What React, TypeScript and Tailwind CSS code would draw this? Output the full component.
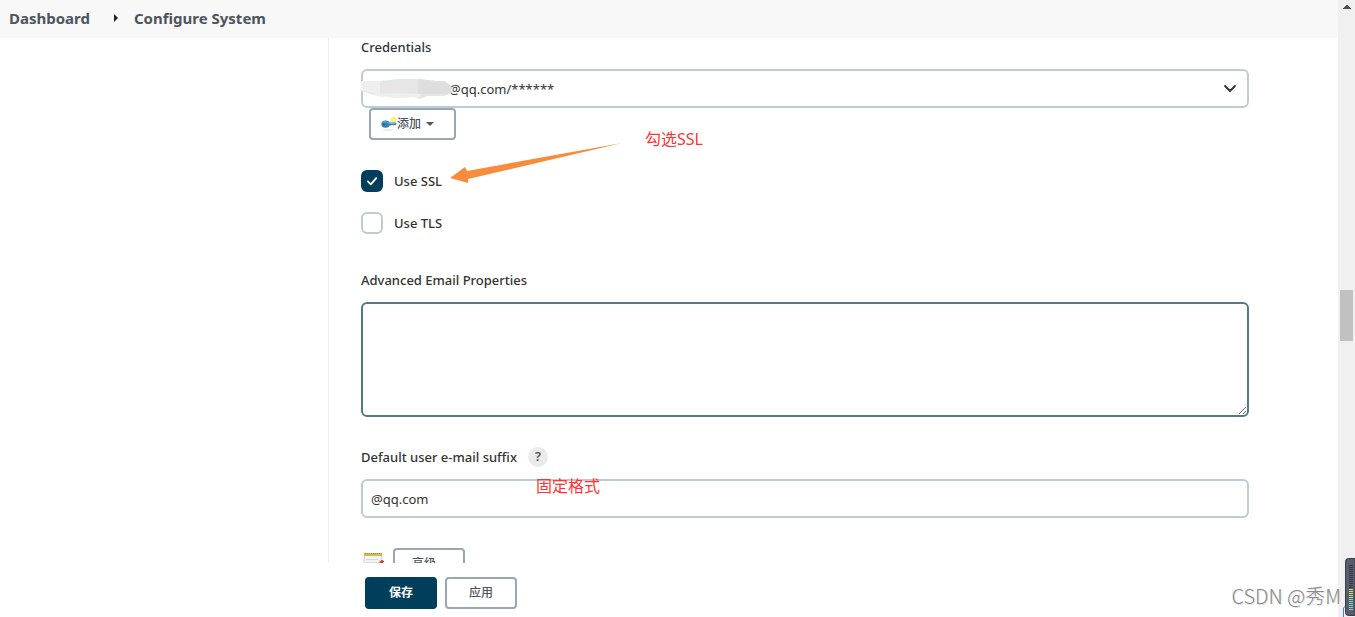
import React, { useState } from 'react';

interface FieldLabelProps {
  htmlFor: string;
  children: React.ReactNode;
  help?: boolean;
}

const FieldLabel: React.FC<FieldLabelProps> = ({ htmlFor, children, help }) => (
  <div className="flex h-[18px] items-center gap-[11px] mb-[13px]">
    <label htmlFor={htmlFor} className="text-[13px] leading-[18px] font-medium text-[#333]">
      {children}
    </label>
    {help && (
      <button
        type="button"
        aria-label="Help"
        className="flex size-5 shrink-0 items-center justify-center rounded-full bg-[#eaeaea] text-[13px] font-semibold text-[#4d545d]"
      >
        ?
      </button>
    )}
  </div>
);

interface CheckOptionProps {
  id: string;
  label: string;
  checked: boolean;
  onChange: (checked: boolean) => void;
}

const CheckOption: React.FC<CheckOptionProps> = ({ id, label, checked, onChange }) => (
  <div className="flex items-center gap-[11px]">
    <span className="relative size-[22px]">
      <input
        id={id}
        type="checkbox"
        checked={checked}
        onChange={(e) => onChange(e.target.checked)}
        className="block size-[22px] appearance-none rounded-md border-2 border-[#bfcbd3] bg-white checked:border-[#003e5c] checked:bg-[#003e5c]"
      />
      {checked && (
        <svg viewBox="0 0 22 22" className="pointer-events-none absolute inset-0" fill="none" stroke="#fff" strokeWidth="1.8" strokeLinecap="round" strokeLinejoin="round">
          <path d="M6.8 11.4l3 2.9 5.4-6.2" />
        </svg>
      )}
    </span>
    <label htmlFor={id} className="text-[13px] leading-[18px] font-medium text-[#333]">
      {label}
    </label>
  </div>
);

const KeyIcon = () => (
  <svg width="16" height="16" viewBox="0 0 16 16">
    <ellipse cx="7" cy="14" rx="5.5" ry="1" fill="#ececec" />
    <circle cx="12.5" cy="3.5" r="2.6" fill="#fff04a" />
    <circle cx="12.5" cy="3.5" r="1" fill="#fffbd0" />
    <ellipse cx="4.6" cy="8.2" rx="4.2" ry="3.6" fill="#3b80b5" />
    <path d="M8 6.5h6.500l1.200 1.200-1.200 1.500-1.200-.4-1 .8-1.200-.8-1 .6H8z" fill="#3b80b5" />
    <path d="M2.5 6.400c2-1 4-.4 5.500 1.100h6" fill="none" stroke="#75afd8" />
    <circle cx="3" cy="8.300" r="0.900" fill="#1d4e79" />
  </svg>
);

const NotepadIcon = () => (
  <svg width="24" height="24" viewBox="0 0 24 24">
    <path d="M3.5 6h17l1 16h-19z" fill="#f4f4f2" stroke="#cfcfcf" />
    <path d="M3 5h18v3H3z" fill="#cdbb55" />
    <path d="M4 5.500h16" stroke="#9c8b3a" strokeDasharray="1 1" />
    <path d="M5 11.500h12M5 14.500h11M5 17.500h10" stroke="#d8dadc" />
    <path d="M13 19l6-6 2 2-6 6-3 1z" fill="#e8a33b" />
    <path d="M18.500 14l2-2 2.700 1-1.500 2.600z" fill="#cf3527" />
  </svg>
);

const outlineButton = 'rounded border-2 border-[#98a8b3] bg-white text-xs font-medium text-[#4d545d]';

const Scrollbar = () => (
  <div className="relative w-[17px] shrink-0 bg-[#f0f0f0]">
    <svg width="17" height="17" viewBox="0 0 17 17" fill="#505050">
      <path d="M8 5h2v1h1v1h1v1h1v1H5V8h1V7h1V6h1z" />
    </svg>
    <div className="absolute top-[47%] right-[2px] left-[2px] h-[51px] bg-[#c1c1c1]" />
    {/* level meter docked to the window edge */}
    <svg width="12" height="60" viewBox="0 0 12 60" className="absolute right-0 bottom-0">
      <path d="M.5 60V51l2-2" fill="none" stroke="#3d7fe6" />
      <path d="M12 1.500H5.500q-3 0-3 3v51q0 3 3 3H12z" fill="#585c6c" stroke="#373a47" />
      <path d="M8 8v24" stroke="#343743" strokeWidth="4" strokeDasharray="1 1" />
      <path d="M8 32v10" stroke="#c6dd72" strokeWidth="4" strokeDasharray="1 1" />
      <path d="M8 42v12" stroke="#73dcc0" strokeWidth="4" strokeDasharray="1 1" />
    </svg>
  </div>
);

const App: React.FC = () => {
  const [useSsl, setUseSsl] = useState(true);
  const [useTls, setUseTls] = useState(false);
  const [properties, setProperties] = useState('');
  const [suffix, setSuffix] = useState('@qq.com');

  return (
    <div className="relative flex h-screen overflow-hidden bg-white font-['Noto_Sans','Noto_Sans_CJK_SC',sans-serif]">
      <div className="flex min-w-0 flex-1 flex-col">
        <nav className="flex h-[38px] shrink-0 items-center bg-[#f8f8f8] pb-[2px] pl-[9px] text-[15px] font-bold text-[#4d545d]">
          <a href="#dashboard">Dashboard</a>
          <svg width="4" height="8" viewBox="0 0 4 8" className="mr-4 ml-6" fill="#222">
            <path d="M0 0l4 4-4 4z" />
          </svg>
          <a href="#configure">Configure System</a>
        </nav>

        <div className="flex min-h-0 flex-1">
          <aside className="w-[329px] shrink-0 border-r border-[#eee]" />
          <main className="min-w-0 flex-1 overflow-hidden pr-[89px] pl-8">
            <FieldLabel htmlFor="credentials">Credentials</FieldLabel>
            <div className="relative">
              <select
                id="credentials"
                className="block h-[39px] w-full appearance-none rounded-md border-2 border-[#bfcbd3] bg-white pt-[2px] pl-[86px] text-[13px] text-[#333]"
              >
                <option>@qq.com/******</option>
              </select>
              <svg width="92" height="24" viewBox="0 0 92 24" className="pointer-events-none absolute top-2 left-0">
                <path d="M0 4h19l18-2h22l16 2h8l6 4 3 5-3 4-6 2H66l-7 3-6-2-17 1-20-2L0 14z" fill="#e6e6e6" />
                <path d="M0 4h19v14l-7-2L0 13z" fill="#efefef" />
                <path d="M57 2l18 2h8l6 4 3 4-3 4-6 1H57z" fill="#dedede" />
                <path d="M12 17l24-1 24 1-3 4-6-1-15 1-20-2z" fill="#edf0f1" />
              </svg>
              <svg width="14" height="8" viewBox="0 0 14 8" className="pointer-events-none absolute top-4 right-3" fill="none" stroke="#333" strokeWidth="1.8" strokeLinecap="round" strokeLinejoin="round">
                <path d="M2 1l5 5 5-5" />
              </svg>
            </div>
            <button type="button" className={`${outlineButton} ml-2 flex h-8 w-[87px] items-center pl-[10px]`}>
              <KeyIcon />
              添加
              <svg width="8" height="4" viewBox="0 0 8 4" className="ml-[5px]" fill="#4d545d">
                <path d="M0 0h8L4 4z" />
              </svg>
            </button>

            <div className="relative mt-[30px] flex flex-col gap-5">
              <CheckOption id="use-ssl" label="Use SSL" checked={useSsl} onChange={setUseSsl} />
              <CheckOption id="use-tls" label="Use TLS" checked={useTls} onChange={setUseTls} />
              <svg width="174" height="44" viewBox="0 0 174 44" className="pointer-events-none absolute -top-7 left-[88px]" fill="#f98b3c">
                <path d="M1 36l15-11 2 4L173 1 19 37v4z" />
              </svg>
              <span className="absolute -top-[43px] left-[284px] text-base leading-6 text-[#ff3333]">勾选SSL</span>
            </div>

            <div className="mt-[37px]">
              <FieldLabel htmlFor="properties">Advanced Email Properties</FieldLabel>
              <textarea
                id="properties"
                value={properties}
                onChange={(e) => setProperties(e.target.value)}
                className="block h-[115px] w-full resize rounded-md border-2 border-[#547789] bg-white p-2 text-[13px] text-[#333] outline-none"
              />
            </div>

            <div className="relative mt-[31px]">
              <FieldLabel htmlFor="suffix" help>
                Default user e-mail suffix
              </FieldLabel>
              <input
                id="suffix"
                type="text"
                value={suffix}
                onChange={(e) => setSuffix(e.target.value)}
                className="block h-[39px] w-full rounded-md border-2 border-[#bfcbd3] bg-white px-2 text-[13px] text-[#333]"
              />
              <span className="absolute top-[26px] left-[175px] text-base leading-6 text-[#ff3333]">固定格式</span>
            </div>

            <div className="mt-[30px] flex items-start gap-2">
              <NotepadIcon />
              <button type="button" className={`${outlineButton} h-8 w-[72px]`}>
                高级...
              </button>
            </div>
          </main>
        </div>

        <footer className="flex h-[54px] shrink-0 items-start gap-2 pt-[14px] pl-[365px]">
          <button type="submit" className="h-8 w-[72px] rounded bg-[#003e5c] text-xs font-bold text-white">
            保存
          </button>
          <button type="button" className={`${outlineButton} h-8 w-[72px]`}>
            应用
          </button>
        </footer>
      </div>

      <Scrollbar />
      <span className="pointer-events-none absolute right-[14px] bottom-[6px] font-['Noto_Sans_CJK_SC',sans-serif] text-xl leading-[30px] font-light text-[#888] [text-shadow:1px_1px_1px_#ddd]">
        CSDN @秀M
      </span>
    </div>
  );
};

export default App;
